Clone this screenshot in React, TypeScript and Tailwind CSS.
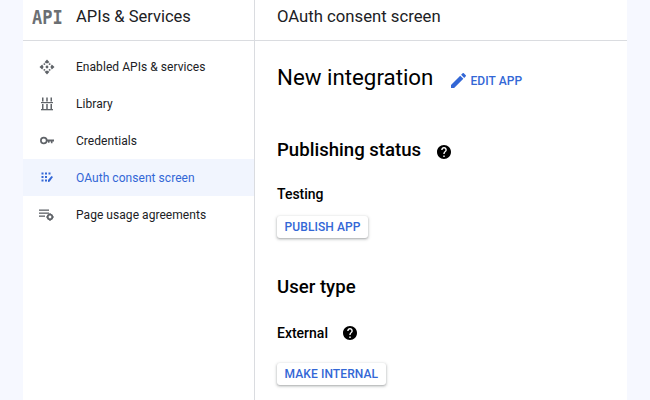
import React from "react";

const Help = () => (
  <svg width="14" height="14" viewBox="2 2 20 20" fill="#000">
    <path d="M12 2C6.48 2 2 6.48 2 12s4.48 10 10 10 10-4.48 10-10S17.52 2 12 2zm1 17h-2v-2h2v2zm2.07-7.75l-.9.92C13.45 12.9 13 13.5 13 15h-2v-.5c0-1.1.45-2.1 1.17-2.83l1.24-1.26c.37-.36.59-.86.59-1.41 0-1.1-.9-2-2-2s-2 .9-2 2H8c0-2.21 1.79-4 4-4s4 1.79 4 4c0 .88-.36 1.68-.93 2.25z" />
  </svg>
);

const EnabledIcon = () => (
  <svg width="16" height="16" viewBox="0 0 16 16" fill="#5f6368">
    <path d="M8 .5 10.500 3.200 8 4.600 5.500 3.200zM8 15.500 5.500 12.800 8 11.400 10.500 12.800zM.5 8 3.200 5.500 4.600 8 3.200 10.500zM15.500 8 12.800 10.500 11.400 8 12.800 5.500z" />
    <circle cx="8" cy="8" r="1.400" />
    <rect x="4.600" y="4.300" width="1.600" height="1.600" />
    <rect x="9.800" y="4.300" width="1.600" height="1.600" />
    <rect x="4.600" y="10.100" width="1.600" height="1.600" />
    <rect x="9.800" y="10.100" width="1.600" height="1.600" />
  </svg>
);

const LibraryIcon = () => (
  <svg width="14" height="14" viewBox="0 0 14 14" fill="#5f6368">
    <rect x="2" y="0.500" width="1.500" height="4" />
    <rect x="6.250" y="0.500" width="1.500" height="4" />
    <rect x="10.500" y="0.500" width="1.500" height="4" />
    <rect x="1" y="5" width="12" height="1.200" />
    <rect x="2" y="7" width="1.500" height="5" />
    <rect x="6.250" y="7" width="1.500" height="5" />
    <rect x="10.500" y="7" width="1.500" height="5" />
    <rect x="1" y="12" width="12" height="1.300" />
  </svg>
);

const KeyIcon = () => (
  <svg width="14" height="9" viewBox="0 0 14 9" fill="none">
    <circle cx="3.800" cy="4.500" r="2.900" stroke="#5f6368" strokeWidth="1.700" />
    <path d="M6.500 3.500h7.500v2h-1.500v1.700h-1.600V5.500H9.500v1.200H8V5.500H6.500z" fill="#5f6368" />
  </svg>
);

const OAuthIcon = () => (
  <svg width="12" height="11" viewBox="0 0 12 11" fill="#3367d6">
    <rect x="0.500" y="0.500" width="2" height="2" />
    <rect x="4" y="0.500" width="2" height="2" />
    <rect x="7.500" y="0.500" width="2" height="2" />
    <rect x="0.500" y="4" width="2" height="2" />
    <rect x="4" y="4" width="2" height="2" />
    <rect x="0.500" y="7.500" width="2" height="2" />
    <rect x="4" y="7.500" width="2" height="2" />
    <path d="M7 8 10.500 4 12 5 8.500 9.800 7 10z" />
  </svg>
);

const PageIcon = () => (
  <svg width="15" height="12" viewBox="0 0 15 12" fill="#5f6368">
    <rect x="0" y="0.500" width="10" height="1.300" />
    <rect x="0" y="3.500" width="10" height="1.300" />
    <rect x="0" y="6.500" width="6" height="1.300" />
    <circle cx="11" cy="8" r="2.300" fill="none" stroke="#5f6368" strokeWidth="1.800" />
    <path d="M10.200 4.300h1.600v1.500h-1.600zM10.200 10.200h1.600v1.500h-1.600zM7.300 7.200h1.500v1.600H7.300zM13.200 7.200h1.500v1.600h-1.500z" />
  </svg>
);

const Pencil = () => (
  <svg width="15" height="15" viewBox="3 3 18 18" fill="#3367d6">
    <path d="M3 17.250V21h3.750L17.810 9.940l-3.750-3.750L3 17.250zM20.710 7.040a1 1 0 0 0 0-1.410l-2.340-2.340a1 1 0 0 0-1.410 0l-1.830 1.830 3.750 3.750 1.830-1.830z" />
  </svg>
);

const items = [
  { label: "Enabled APIs & services", icon: <EnabledIcon /> },
  { label: "Library", icon: <LibraryIcon /> },
  { label: "Credentials", icon: <KeyIcon /> },
  { label: "OAuth consent screen", icon: <OAuthIcon />, active: true },
  { label: "Page usage agreements", icon: <PageIcon /> },
];

const Btn = ({ children }: { children: React.ReactNode }) => (
  <button className="h-[22px] px-[7.500px] rounded-[3px] bg-white text-[#3367d6] text-[12px] font-medium tracking-[0.1px] leading-[22px] shadow-[0_1px_2px_rgba(60,64,67,0.3),0_1px_3px_1px_rgba(60,64,67,0.15)]">
    {children}
  </button>
);

export default function App() {
  return (
    <div className="w-[650px] h-[400px] overflow-hidden bg-[#f6f8ff] px-[23px] font-['Roboto',sans-serif] text-black">
      <div className="w-[604px] h-[400px] bg-white flex flex-col">
        <header className="h-[41px] shrink-0 flex border-b border-[#dadce0]">
          <div className="w-[232px] shrink-0 flex items-center border-r border-[#dadce0] pb-[7px]">
            <span className="w-[53px] pl-[9px] text-[#6b6f73] font-bold text-[17px] leading-[18px] scale-y-[1.18] font-['DejaVu_Sans_Mono',monospace]">API</span>
            <span className="text-[16.500px] leading-[20px] text-[#202124]">APIs &amp; Services</span>
          </div>
          <div className="pl-[22px] flex items-center pb-[7px] text-[16.700px] leading-[20px] text-[#202124]">OAuth consent screen</div>
        </header>
        <div className="flex-1 flex min-h-0">
          <nav className="w-[232px] shrink-0 border-r border-[#dadce0] pt-[7px]">
            {items.map((it) => (
              <div key={it.label} className={`h-[37px] flex items-center ${it.active ? "bg-[#f1f5fe] text-[#3367d6]" : "text-[#202124]"}`}>
                <span className="w-[53px] pr-[6px] flex justify-center shrink-0">{it.icon}</span>
                <span className="text-[12px] leading-[16px] tracking-[0.05px]">{it.label}</span>
              </div>
            ))}
          </nav>
          <main className="flex-1 pl-[22px] flex flex-col items-start">
            <div className="flex items-center h-[32px] mt-[20px]">
              <h1 className="text-[22.300px] leading-[32px] font-normal">New integration</h1>
              <span className="ml-[18px] mt-[7px] flex items-center gap-[4px] text-[#3367d6] text-[12px] font-medium tracking-[0.1px]"><Pencil />EDIT APP</span>
            </div>
            <div className="flex items-center h-[26px] mt-[44px]">
              <h2 className="text-[18.600px] leading-[26px] font-medium">Publishing status</h2>
              <span className="ml-[16px] mt-[3px]"><Help /></span>
            </div>
            <div className="text-[14px] leading-[18px] font-medium mt-[22px]">Testing</div>
            <div className="mt-[11px]"><Btn>PUBLISH APP</Btn></div>
            <h2 className="text-[18.600px] leading-[26px] font-medium mt-[36px]">User type</h2>
            <div className="flex items-center h-[18px] mt-[24px]">
              <span className="text-[14px] leading-[18px] font-medium">External</span>
              <span className="ml-[15px]"><Help /></span>
            </div>
            <div className="mt-[19px]"><Btn>MAKE INTERNAL</Btn></div>
          </main>
        </div>
      </div>
    </div>
  );
}
